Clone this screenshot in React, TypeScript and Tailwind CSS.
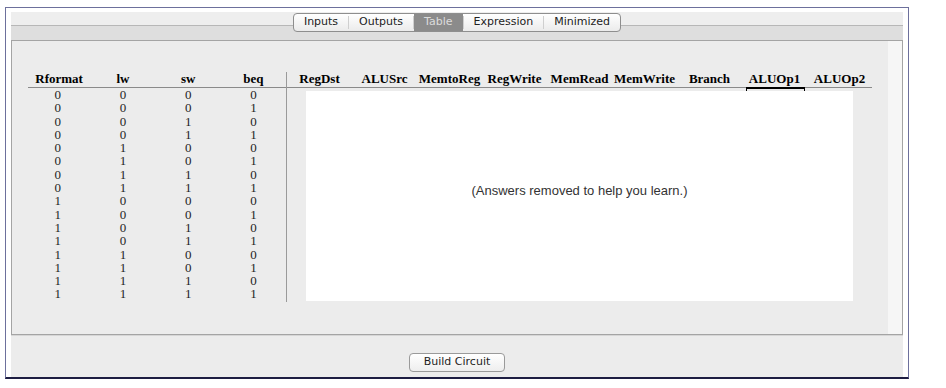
const LEFT_COLS = ['Rformat', 'lw', 'sw', 'beq'];
const RIGHT_COLS = ['RegDst', 'ALUSrc', 'MemtoReg', 'RegWrite', 'MemRead', 'MemWrite', 'Branch', 'ALUOp1', 'ALUOp2'];
const TABS = ['Inputs', 'Outputs', 'Table', 'Expression', 'Minimized'];

const ROWS = Array.from({ length: 16 }, (_, i) => [(i >> 3) & 1, (i >> 2) & 1, (i >> 1) & 1, i & 1]);

const serif = { fontFamily: '"Liberation Serif", "Times New Roman", serif' };
const ui = { fontFamily: '"DejaVu Sans", "Liberation Sans", sans-serif' };

function Tabs() {
  return (
    <div className="absolute left-0 right-0 top-[1px] flex justify-center">
      <div
        className="flex h-[19px] rounded-[4px] border border-[#8e8e8e] bg-gradient-to-b from-white to-[#ebebeb] overflow-hidden text-[11px] text-[#222]"
        style={ui}
      >
        {TABS.map((t, i) => {
          const selected = t === 'Table';
          return (
            <div key={t} className="flex items-center">
              {i > 0 && <div className="w-px h-[13px] bg-[#cfcfcf]" />}
              <div
                className={
                  selected
                    ? 'h-[17px] flex items-center px-[10px] bg-[#8b8b8b] text-[#dcdcdc]'
                    : 'h-[17px] flex items-center px-[10px]'
                }
              >
                {t}
              </div>
            </div>
          );
        })}
      </div>
    </div>
  );
}

export default function App() {
  return (
    <div className="w-[946px] h-[388px] bg-white pt-[7px] pl-[5px]">
      <div className="w-[904px] h-[372px] border border-[#6d709c] border-b-2 border-b-[#1d1d42] pt-[4px] px-[5px]">
        <div className="h-full bg-[#ececec] flex flex-col">
          {/* tab strip */}
          <div className="relative h-[28px] flex flex-col">
            <div className="h-[14px] bg-[#eeeeee] border-b border-[#b7b7b7]" />
            <div className="flex-1 bg-[#dedede]" />
            <Tabs />
          </div>

          {/* table panel */}
          <div className="h-[295px] border border-[#a4a4a4] flex">
            <div className="flex-1 pt-[31px] pl-[13px] flex">
              {/* left table */}
              <div className="w-[262px] border-r border-[#9a9a9a] h-[230px]" style={serif}>
                <div className="flex h-[16px] ml-[3px] border-b border-[#8a8a8a] items-end pb-[1px]">
                  {LEFT_COLS.map((c, i) => (
                    <div
                      key={c}
                      className={
                        i === 0
                          ? 'w-[62.5px] text-center text-[13px] font-bold leading-[14px] text-black'
                          : 'w-[65.5px] text-center text-[13px] font-bold leading-[14px] text-black'
                      }
                    >
                      {c}
                    </div>
                  ))}
                </div>
                <div className="text-[13px] text-[#1e1e1e]">
                  {ROWS.map((r, i) => (
                    <div key={i} className="flex h-[13.3px] leading-[13.3px]">
                      {r.map((v, j) => (
                        <div key={j} className="w-[65.5px] text-center">
                          {v}
                        </div>
                      ))}
                    </div>
                  ))}
                </div>
              </div>

              {/* right table */}
              <div className="w-[585px]" style={serif}>
                <div className="flex h-[16px] border-b border-[#8a8a8a] items-end pb-[1px]">
                  {RIGHT_COLS.map((c) => (
                    <div
                      key={c}
                      className="relative w-[65px] text-center text-[13px] font-bold leading-[14px] text-black"
                    >
                      {c}
                      {c === 'ALUOp1' && (
                        <div className="absolute left-[4px] right-[2px] top-[15px] h-[4px] border-t-2 border-x border-black" />
                      )}
                    </div>
                  ))}
                </div>
                <div className="h-[213px] px-[19px] pt-[3px]">
                  <div className="h-full bg-white flex items-center justify-center pb-[10px]">
                    <span className="text-[13px] text-[#333]" style={{ fontFamily: '"Liberation Sans", Arial, sans-serif' }}>
                      (Answers removed to help you learn.)
                    </span>
                  </div>
                </div>
              </div>
            </div>
            <div className="w-[14px] bg-[#f6f6f6]" />
          </div>

          {/* bottom bar */}
          <div className="flex-1 border-t border-[#d6d6d6] flex justify-center pt-[17px]">
            <button
              className="h-[19px] w-[96px] rounded-[4px] border border-[#9a9a9a] bg-gradient-to-b from-white to-[#eeeeee] text-[11px] text-[#1e1e1e] flex items-center justify-center"
              style={ui}
            >
              Build Circuit
            </button>
          </div>
        </div>
      </div>
    </div>
  );
}
